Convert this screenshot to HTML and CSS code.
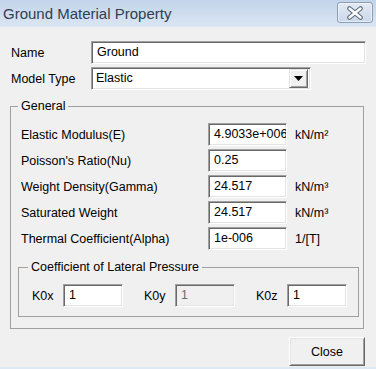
FILE: index.html
```html
<!DOCTYPE html>
<html>
<head>
<meta charset="utf-8">
<link rel="stylesheet" href="styles.css">
</head>
<body>
<div class="window">
  <div class="titlebar">
    <span class="title">Ground Material Property</span>
    <div class="close-x">
      <svg width="18" height="14" viewBox="0 0 18 14">
        <path d="M3.5 2.5 L14.5 11.5 M14.5 2.5 L3.5 11.5" stroke="#5d6b7c" stroke-width="4.6" stroke-linecap="round" fill="none"/>
        <path d="M3.5 2.5 L14.5 11.5 M14.5 2.5 L3.5 11.5" stroke="#ffffff" stroke-width="2.4" stroke-linecap="round" fill="none"/>
      </svg>
    </div>
  </div>
  <div class="content">
    <div class="top-row first">
      <span class="top-label">Name</span>
      <div class="field name-field"><span class="val">Ground</span></div>
    </div>
    <div class="top-row">
      <span class="top-label">Model Type</span>
      <div class="field select-field">
        <span class="val">Elastic</span>
        <span class="dd-btn">
          <svg width="9" height="5" viewBox="0 0 9 5"><path d="M0 0 H9 L4.5 5 Z" fill="#000"/></svg>
        </span>
      </div>
    </div>
    <fieldset class="group general">
      <legend>General</legend>
      <div class="prop-row"><span class="prop-label">Elastic Modulus(E)</span><div class="field prop-field"><span class="val">4.9033e+006</span></div><span class="unit">kN/m²</span></div>
      <div class="prop-row"><span class="prop-label">Poisson's Ratio(Nu)</span><div class="field prop-field"><span class="val">0.25</span></div></div>
      <div class="prop-row"><span class="prop-label">Weight Density(Gamma)</span><div class="field prop-field"><span class="val">24.517</span></div><span class="unit">kN/m³</span></div>
      <div class="prop-row"><span class="prop-label">Saturated Weight</span><div class="field prop-field"><span class="val">24.517</span></div><span class="unit">kN/m³</span></div>
      <div class="prop-row"><span class="prop-label">Thermal Coefficient(Alpha)</span><div class="field prop-field"><span class="val">1e-006</span></div><span class="unit">1/[T]</span></div>
      <fieldset class="group lateral">
        <legend>Coefficient of Lateral Pressure</legend>
        <div class="k-row">
          <div class="k-item"><span class="k-label">K0x</span><div class="field k-field"><span class="val">1</span></div></div>
          <div class="k-item"><span class="k-label">K0y</span><div class="field k-field disabled"><span class="val">1</span></div></div>
          <div class="k-item"><span class="k-label">K0z</span><div class="field k-field"><span class="val">1</span></div></div>
        </div>
      </fieldset>
    </fieldset>
    <div class="footer">
      <div class="btn">Close</div>
    </div>
  </div>
</div>
</body>
</html>
```
FILE: styles.css
```css
html, body {
  margin: 0;
  padding: 0;
}
body {
  width: 376px;
  height: 369px;
  overflow: hidden;
  background: #f0f0f0;
  font-family: "Liberation Sans", Arial, sans-serif;
  font-size: 12.5px;
  color: #000;
}
.window {
  width: 376px;
  height: 369px;
  display: flex;
  flex-direction: column;
  box-sizing: border-box;
  border-bottom: 2px solid #dde8f4;
}
.titlebar {
  height: 27px;
  flex: none;
  display: flex;
  align-items: center;
  justify-content: space-between;
  padding: 0 3px 0 3px;
  box-sizing: border-box;
  background: linear-gradient(#c1d4e9, #dbe6f3);
}
.title {
  font-size: 15px;
  color: #2f3e50;
  line-height: 18px;
  margin-top: 1px;
}
.close-x {
  width: 36px;
  height: 21px;
  box-sizing: border-box;
  border: 1px solid #8d9db3;
  border-radius: 3px;
  background: linear-gradient(#e2eaf4, #cad8e9);
  display: flex;
  align-items: center;
  justify-content: center;
  margin-top: -2px;
  box-shadow: inset 0 0 0 1px rgba(255,255,255,0.5);
}
.content {
  flex: 1;
  display: flex;
  flex-direction: column;
  padding: 0 10px 0 10px;
}
.top-row {
  display: flex;
  align-items: center;
  margin-top: 3px;
  padding-left: 1px;
}
.top-row.first {
  margin-top: 14px;
}
.top-label {
  width: 80px;
  flex: none;
}
.field {
  height: 23px;
  box-sizing: border-box;
  background: #fff;
  border: 1px solid;
  border-color: #a0a0a0 #ffffff #ffffff #a0a0a0;
  box-shadow: inset 1px 1px 0 #696969, inset -1px -1px 0 #e3e3e3;
  display: flex;
  align-items: center;
  overflow: hidden;
  white-space: nowrap;
}
.val {
  padding-left: 5px;
  line-height: 19px;
}
.name-field {
  width: 275px;
}
.select-field {
  width: 220px;
  justify-content: space-between;
}
.select-field .val {
  padding-left: 4px;
}
.dd-btn {
  width: 19px;
  height: 19px;
  margin-right: 2px;
  box-sizing: border-box;
  background: #f0f0f0;
  border: 1px solid;
  border-color: #e3e3e3 #696969 #696969 #e3e3e3;
  box-shadow: inset 1px 1px 0 #ffffff, inset -1px -1px 0 #a0a0a0;
  display: flex;
  align-items: center;
  justify-content: center;
}
.group {
  margin: 0;
  border: 1px solid #a0a0a0;
  border-radius: 0;
  min-width: 0;
}
.group legend {
  padding: 0 3px;
  line-height: 14px;
  margin-left: 0;
}
.general {
  margin-top: 9px;
  width: 354px;
  box-sizing: border-box;
  padding: 10px 4px 11px 7px;
}
.prop-row {
  display: flex;
  align-items: center;
  padding-left: 3px;
  margin-bottom: 3px;
}
.prop-label {
  width: 187px;
  flex: none;
}
.prop-field {
  width: 79px;
}
.unit {
  margin-left: 8px;
}
.lateral {
  margin-top: 10px;
  width: 341px;
  box-sizing: border-box;
  padding: 10px 4px 9px 13px;
}
.lateral .legend-fix {
  margin-left: 0;
}
.lateral legend {
  margin-left: -4px;
}
.k-row {
  display: flex;
  gap: 21px;
}
.k-item {
  display: flex;
  align-items: center;
}
.k-label {
  width: 31px;
}
.k-field {
  width: 60px;
}
.k-field.disabled {
  background: #f0f0f0;
  color: #6d6d6d;
}
.footer {
  display: flex;
  justify-content: flex-end;
  margin-top: 8px;
  padding-right: 0;
}
.btn {
  width: 76px;
  height: 29px;
  box-sizing: border-box;
  border: 1px solid;
  border-color: #ffffff #696969 #696969 #ffffff;
  box-shadow: inset 1px 1px 0 #e3e3e3, inset -1px -1px 0 #a0a0a0;
  background: #f0f0f0;
  display: flex;
  align-items: center;
  justify-content: center;
  margin-right: 1px;
}
```
